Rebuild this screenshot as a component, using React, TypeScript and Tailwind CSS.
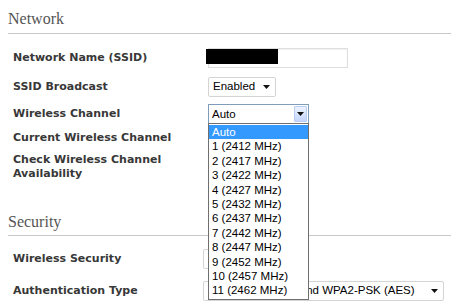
const LABEL = "font-['DejaVu_Sans',Verdana,sans-serif] text-[11px] font-bold text-[#383838] leading-[14px]";
const CTRL = "font-['Liberation_Sans',Arial,sans-serif] text-[11.5px] text-black";

const CHANNELS = [
  "Auto",
  "1 (2412 MHz)",
  "2 (2417 MHz)",
  "3 (2422 MHz)",
  "4 (2427 MHz)",
  "5 (2432 MHz)",
  "6 (2437 MHz)",
  "7 (2442 MHz)",
  "8 (2447 MHz)",
  "9 (2452 MHz)",
  "10 (2457 MHz)",
  "11 (2462 MHz)",
];

function Caret() {
  return (
    <svg width="7" height="4" viewBox="0 0 7 4" aria-hidden="true">
      <path d="M0 0h7L3.5 4z" fill="#111" />
    </svg>
  );
}

function Heading({ title, pad }: { title: string; pad: string }) {
  return (
    <div className={`box-border border-b border-[#c8c8c8] ${pad}`}>
      <h2 className="font-['Liberation_Serif',Georgia,serif] text-[16px] leading-[20px] text-[#555]">{title}</h2>
    </div>
  );
}

function PlainSelect({ value, width }: { value: string; width: string }) {
  return (
    <div className={`flex h-[20px] items-center justify-between rounded-[2px] border border-[#d4d4d4] bg-white pl-[4px] pr-[5px] ${width} ${CTRL}`}>
      <span className="whitespace-nowrap overflow-hidden">{value}</span>
      <Caret />
    </div>
  );
}

export default function App() {
  return (
    <div className="h-[308px] w-[451px] overflow-hidden bg-white pl-[8px]">
      <Heading title="Network" pad="h-[34px] pt-[9px]" />

      <div className="relative pl-[5px]">
        <div className="mt-[14px] flex h-[20px] items-center">
          <span className={`w-[195px] ${LABEL}`}>Network Name (SSID)</span>
          <div className="relative h-[20px] w-[140px] border border-[#dedede] bg-white shadow-[inset_0_1px_2px_rgba(0,0,0,0.06)]">
            <div className="absolute left-[-3px] top-0 h-[15px] w-[72px] bg-black" />
          </div>
        </div>

        <div className="mt-[9px] flex h-[20px] items-center">
          <span className={`w-[195px] ${LABEL}`}>SSID Broadcast</span>
          <PlainSelect value="Enabled" width="w-[68px]" />
        </div>

        <div className="mt-[7px] flex h-[20px] items-center">
          <span className={`w-[195px] ${LABEL}`}>Wireless Channel</span>
          <div className={`relative flex h-[20px] w-[101px] border border-[#7f9db9] bg-white ${CTRL}`}>
            <span className="flex-1 pl-[3px] leading-[18px]">Auto</span>
            <div className="m-px flex w-[13px] items-center justify-center rounded-[1px] border border-[#b9cdf3] bg-gradient-to-b from-[#eef4fe] to-[#c3d5fb]">
              <Caret />
            </div>
            <ul className="absolute left-[-1px] top-[18px] z-10 w-[101px] border border-[#6f6f6f] bg-white py-px">
              {CHANNELS.map((c, i) => (
                <li
                  key={c}
                  className={`h-[14.4px] pl-[3px] leading-[14.4px] whitespace-nowrap ${i === 0 ? "bg-[#3399ff] text-white" : "text-black"}`}
                >
                  {c}
                </li>
              ))}
            </ul>
          </div>
        </div>

        <div className={`mt-[7px] ${LABEL}`}>Current Wireless Channel</div>
        <div className={`mt-[8px] ${LABEL}`}>
          Check Wireless Channel
          <br />
          Availability
        </div>
      </div>

      <div className="mt-[20px]">
        <Heading title="Security" pad="h-[35px] pt-[11px]" />
      </div>

      <div className="pl-[5px]">
        <div className="mt-[13px] flex h-[20px] items-center">
          <span className={`w-[190px] ${LABEL}`}>Wireless Security</span>
          <PlainSelect value="WPA2-PSK" width="w-[96px]" />
        </div>
        <div className="mt-[12px] flex h-[20px] items-center">
          <span className={`w-[190px] ${LABEL}`}>Authentication Type</span>
          <PlainSelect value="WPA-PSK (TKIP) and WPA2-PSK (AES)" width="w-[241px]" />
        </div>
      </div>
    </div>
  );
}
